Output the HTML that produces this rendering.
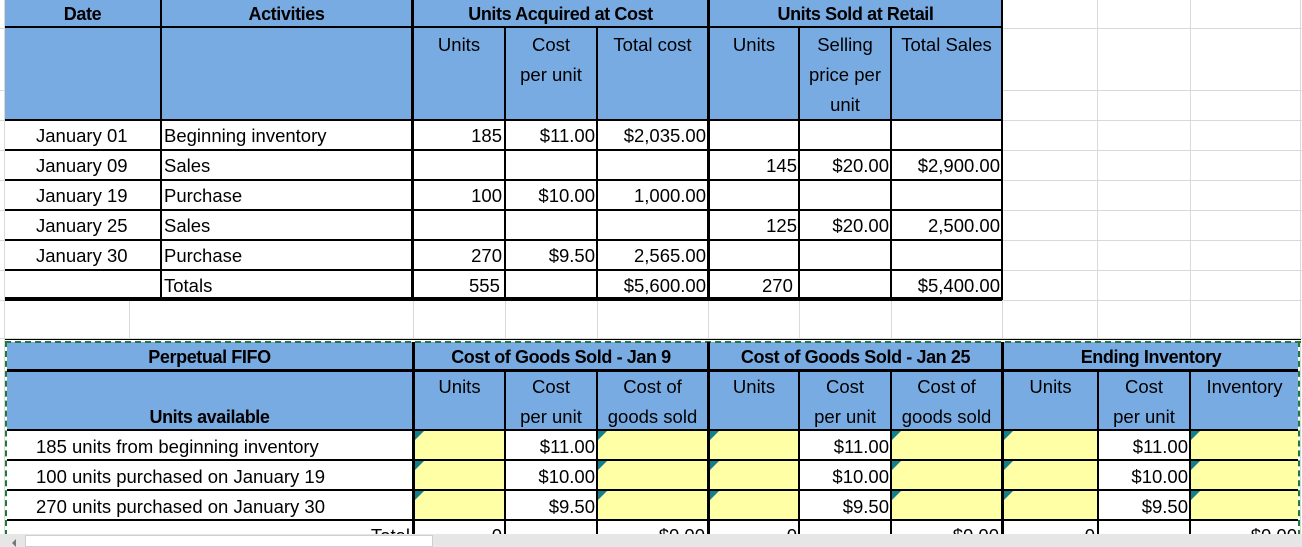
<!DOCTYPE html>
<html><head><meta charset="utf-8"><style>
*{margin:0;padding:0;box-sizing:border-box}
body{width:1302px;height:547px;overflow:hidden;background:#fff;position:relative;font-family:"Liberation Sans",sans-serif;font-size:18.5px;color:#000}
div{position:absolute}
.bg{background:#79abe3}
.y{background:#ffffa6}
.h{background:#000}
.g{background:#d9d9d9}
.t{white-space:nowrap;line-height:20px}
.b{font-weight:bold;letter-spacing:-0.4px;font-size:18px}
.c{text-align:center}
.r{text-align:right}
.tri{width:0;height:0;border-top:9px solid #127f8a;border-right:9px solid transparent}
</style></head><body>
<!-- light gridlines -->
<div class="g" style="left:0;top:120px;width:1302px;height:1px"></div>
<div class="g" style="left:0;top:150px;width:1302px;height:1px"></div>
<div class="g" style="left:0;top:180px;width:1302px;height:1px"></div>
<div class="g" style="left:0;top:210px;width:1302px;height:1px"></div>
<div class="g" style="left:0;top:240px;width:1302px;height:1px"></div>
<div class="g" style="left:0;top:270px;width:1302px;height:1px"></div>
<div class="g" style="left:0;top:300px;width:1302px;height:1px"></div>
<div class="g" style="left:0;top:338px;width:1302px;height:1px"></div>
<div class="g" style="left:0;top:28px;width:1302px;height:1px"></div>
<div class="g" style="left:0;top:90px;width:1302px;height:1px"></div>
<div class="g" style="left:1097px;top:0;width:1px;height:547px"></div>
<div class="g" style="left:1190px;top:0;width:1px;height:547px"></div>
<div class="g" style="left:1300px;top:0;width:1px;height:547px"></div>
<div class="g" style="left:4px;top:0;width:1px;height:547px"></div>
<div class="g" style="left:129px;top:300px;width:1px;height:40px"></div>
<div class="g" style="left:413px;top:300px;width:1px;height:40px"></div>
<div class="g" style="left:505px;top:300px;width:1px;height:40px"></div>
<div class="g" style="left:597px;top:300px;width:1px;height:40px"></div>
<div class="g" style="left:708px;top:300px;width:1px;height:40px"></div>
<div class="g" style="left:799px;top:300px;width:1px;height:40px"></div>
<div class="g" style="left:891px;top:300px;width:1px;height:40px"></div>
<div class="g" style="left:1002px;top:300px;width:1px;height:40px"></div>

<!-- TOP TABLE -->
<div class="bg" style="left:5px;top:0;width:997px;height:120px"></div>
<div style="left:5px;top:121px;width:997px;height:179px;background:#fff"></div>
<div class="h" style="left:5px;top:26px;width:997px;height:2px"></div>
<div class="h" style="left:5px;top:119px;width:997px;height:2px"></div>
<div class="h" style="left:5px;top:149px;width:997px;height:2px"></div>
<div class="h" style="left:5px;top:179px;width:997px;height:2px"></div>
<div class="h" style="left:5px;top:209px;width:997px;height:2px"></div>
<div class="h" style="left:5px;top:239px;width:997px;height:2px"></div>
<div class="h" style="left:5px;top:269px;width:997px;height:2px"></div>
<div class="h" style="left:5px;top:297px;width:997px;height:4px"></div>
<div class="h" style="left:160px;top:0;width:2px;height:300px"></div>
<div class="h" style="left:411px;top:0;width:3px;height:300px"></div>
<div class="h" style="left:504px;top:28px;width:2px;height:272px"></div>
<div class="h" style="left:596px;top:28px;width:2px;height:272px"></div>
<div class="h" style="left:707px;top:0;width:3px;height:300px"></div>
<div class="h" style="left:798px;top:28px;width:2px;height:272px"></div>
<div class="h" style="left:890px;top:28px;width:2px;height:272px"></div>
<div class="h" style="left:1001px;top:0;width:2px;height:300px"></div>

<div class="t b c" style="left:5px;top:4px;width:155px">Date</div>
<div class="t b c" style="left:162px;top:4px;width:249px">Activities</div>
<div class="t b c" style="left:414px;top:4px;width:293px">Units Acquired at Cost</div>
<div class="t b c" style="left:710px;top:4px;width:291px">Units Sold at Retail</div>
<div class="t c" style="left:414px;top:35px;width:90px">Units</div>
<div class="t c" style="left:506px;top:35px;width:90px">Cost</div>
<div class="t c" style="left:506px;top:65px;width:90px">per unit</div>
<div class="t c" style="left:598px;top:35px;width:109px">Total cost</div>
<div class="t c" style="left:710px;top:35px;width:88px">Units</div>
<div class="t c" style="left:800px;top:35px;width:90px">Selling</div>
<div class="t c" style="left:800px;top:65px;width:90px">price per</div>
<div class="t c" style="left:800px;top:95px;width:90px">unit</div>
<div class="t c" style="left:892px;top:35px;width:109px">Total Sales</div>

<div class="t" style="left:36px;top:126px">January 01</div>
<div class="t" style="left:36px;top:156px">January 09</div>
<div class="t" style="left:36px;top:186px">January 19</div>
<div class="t" style="left:36px;top:216px">January 25</div>
<div class="t" style="left:36px;top:246px">January 30</div>
<div class="t" style="left:164px;top:126px">Beginning inventory</div>
<div class="t" style="left:164px;top:156px">Sales</div>
<div class="t" style="left:164px;top:186px">Purchase</div>
<div class="t" style="left:164px;top:216px">Sales</div>
<div class="t" style="left:164px;top:246px">Purchase</div>
<div class="t" style="left:164px;top:276px">Totals</div>
<div class="t r" style="left:414px;top:126px;width:88px">185</div>
<div class="t r" style="left:414px;top:186px;width:88px">100</div>
<div class="t r" style="left:414px;top:246px;width:88px">270</div>
<div class="t" style="left:469px;top:276px">555</div>
<div class="t r" style="left:506px;top:126px;width:89px">$11.00</div>
<div class="t r" style="left:506px;top:186px;width:89px">$10.00</div>
<div class="t r" style="left:506px;top:246px;width:89px">$9.50</div>
<div class="t r" style="left:598px;top:126px;width:108px">$2,035.00</div>
<div class="t r" style="left:598px;top:186px;width:108px">1,000.00</div>
<div class="t r" style="left:598px;top:246px;width:108px">2,565.00</div>
<div class="t r" style="left:598px;top:276px;width:108px">$5,600.00</div>
<div class="t r" style="left:710px;top:156px;width:87px">145</div>
<div class="t r" style="left:710px;top:216px;width:87px">125</div>
<div class="t" style="left:762px;top:276px">270</div>
<div class="t r" style="left:800px;top:156px;width:89px">$20.00</div>
<div class="t r" style="left:800px;top:216px;width:89px">$20.00</div>
<div class="t r" style="left:892px;top:156px;width:108px">$2,900.00</div>
<div class="t r" style="left:892px;top:216px;width:108px">2,500.00</div>
<div class="t r" style="left:892px;top:276px;width:108px">$5,400.00</div>

<!-- BOTTOM TABLE -->
<div style="left:5px;top:339px;width:1296px;height:1px;background:#000"></div>
<div class="bg" style="left:7px;top:342px;width:1291px;height:88px"></div>
<div style="left:5px;top:341px;width:1296px;height:2px;border-top:2px dashed #1f7a3a"></div>
<div style="left:5px;top:341px;width:2px;height:195px;border-left:2px dashed #1f7a3a"></div>
<div style="left:1298px;top:341px;width:2px;height:195px;border-left:2px dashed #1f7a3a"></div>
<div class="y" style="left:414px;top:431px;width:90px;height:89px"></div>
<div class="y" style="left:598px;top:431px;width:109px;height:89px"></div>
<div class="y" style="left:710px;top:431px;width:88px;height:89px"></div>
<div class="y" style="left:892px;top:431px;width:109px;height:89px"></div>
<div class="y" style="left:1003px;top:431px;width:94px;height:89px"></div>
<div class="y" style="left:1191px;top:431px;width:107px;height:89px"></div>
<div class="h" style="left:7px;top:369px;width:1291px;height:3px"></div>
<div class="h" style="left:7px;top:429px;width:1291px;height:2px"></div>
<div class="h" style="left:7px;top:459px;width:1291px;height:2px"></div>
<div class="h" style="left:7px;top:489px;width:1291px;height:2px"></div>
<div class="h" style="left:7px;top:519px;width:1291px;height:2px"></div>
<div class="h" style="left:412px;top:342px;width:3px;height:195px"></div>
<div class="h" style="left:504px;top:370px;width:2px;height:167px"></div>
<div class="h" style="left:596px;top:370px;width:2px;height:167px"></div>
<div class="h" style="left:707px;top:342px;width:3px;height:195px"></div>
<div class="h" style="left:798px;top:370px;width:2px;height:167px"></div>
<div class="h" style="left:890px;top:370px;width:2px;height:167px"></div>
<div class="h" style="left:1001px;top:342px;width:3px;height:195px"></div>
<div class="h" style="left:1097px;top:370px;width:2px;height:167px"></div>
<div class="h" style="left:1189px;top:370px;width:2px;height:167px"></div>

<div class="tri" style="left:415px;top:431px"></div>
<div class="tri" style="left:415px;top:461px"></div>
<div class="tri" style="left:415px;top:491px"></div>
<div class="tri" style="left:598px;top:431px"></div>
<div class="tri" style="left:598px;top:461px"></div>
<div class="tri" style="left:598px;top:491px"></div>
<div class="tri" style="left:710px;top:431px"></div>
<div class="tri" style="left:710px;top:461px"></div>
<div class="tri" style="left:710px;top:491px"></div>
<div class="tri" style="left:892px;top:431px"></div>
<div class="tri" style="left:892px;top:461px"></div>
<div class="tri" style="left:892px;top:491px"></div>
<div class="tri" style="left:1004px;top:431px"></div>
<div class="tri" style="left:1004px;top:461px"></div>
<div class="tri" style="left:1004px;top:491px"></div>
<div class="tri" style="left:1191px;top:431px"></div>
<div class="tri" style="left:1191px;top:461px"></div>
<div class="tri" style="left:1191px;top:491px"></div>

<div class="t b c" style="left:7px;top:347px;width:405px">Perpetual FIFO</div>
<div class="t b c" style="left:415px;top:347px;width:292px">Cost of Goods Sold - Jan 9</div>
<div class="t b c" style="left:710px;top:347px;width:291px">Cost of Goods Sold - Jan 25</div>
<div class="t b c" style="left:1004px;top:347px;width:294px">Ending Inventory</div>
<div class="t b c" style="left:7px;top:407px;width:405px">Units available</div>
<div class="t c" style="left:415px;top:377px;width:89px">Units</div>
<div class="t c" style="left:506px;top:377px;width:90px">Cost</div>
<div class="t c" style="left:506px;top:407px;width:90px">per unit</div>
<div class="t c" style="left:598px;top:377px;width:109px">Cost of</div>
<div class="t c" style="left:598px;top:407px;width:109px">goods sold</div>
<div class="t c" style="left:710px;top:377px;width:88px">Units</div>
<div class="t c" style="left:800px;top:377px;width:90px">Cost</div>
<div class="t c" style="left:800px;top:407px;width:90px">per unit</div>
<div class="t c" style="left:892px;top:377px;width:109px">Cost of</div>
<div class="t c" style="left:892px;top:407px;width:109px">goods sold</div>
<div class="t c" style="left:1004px;top:377px;width:93px">Units</div>
<div class="t c" style="left:1099px;top:377px;width:90px">Cost</div>
<div class="t c" style="left:1099px;top:407px;width:90px">per unit</div>
<div class="t c" style="left:1191px;top:377px;width:107px">Inventory</div>

<div class="t" style="left:36px;top:437px">185 units from beginning inventory</div>
<div class="t" style="left:36px;top:467px">100 units purchased on January 19</div>
<div class="t" style="left:36px;top:497px">270 units purchased on January 30</div>
<div class="t r" style="left:506px;top:437px;width:89px">$11.00</div>
<div class="t r" style="left:506px;top:467px;width:89px">$10.00</div>
<div class="t r" style="left:506px;top:497px;width:89px">$9.50</div>
<div class="t r" style="left:800px;top:437px;width:89px">$11.00</div>
<div class="t r" style="left:800px;top:467px;width:89px">$10.00</div>
<div class="t r" style="left:800px;top:497px;width:89px">$9.50</div>
<div class="t r" style="left:1099px;top:437px;width:89px">$11.00</div>
<div class="t r" style="left:1099px;top:467px;width:89px">$10.00</div>
<div class="t r" style="left:1099px;top:497px;width:89px">$9.50</div>

<div class="t r" style="left:300px;top:526px;width:110px">Total</div>
<div class="t r" style="left:415px;top:526px;width:87px">0</div>
<div class="t r" style="left:598px;top:526px;width:107px">$0.00</div>
<div class="t r" style="left:710px;top:526px;width:87px">0</div>
<div class="t r" style="left:892px;top:526px;width:107px">$0.00</div>
<div class="t r" style="left:1004px;top:526px;width:91px">0</div>
<div class="t r" style="left:1191px;top:526px;width:106px">$0.00</div>

<!-- scrollbar -->
<div style="left:0;top:534px;width:1302px;height:13px;background:#e6e6e6"></div>
<div style="left:25px;top:535px;width:408px;height:12px;background:#fff;border:1px solid #cfcfcf"></div>
<div style="left:12px;top:539px;width:0;height:0;border-top:4px solid transparent;border-bottom:4px solid transparent;border-right:4px solid #777"></div>
</body></html>
